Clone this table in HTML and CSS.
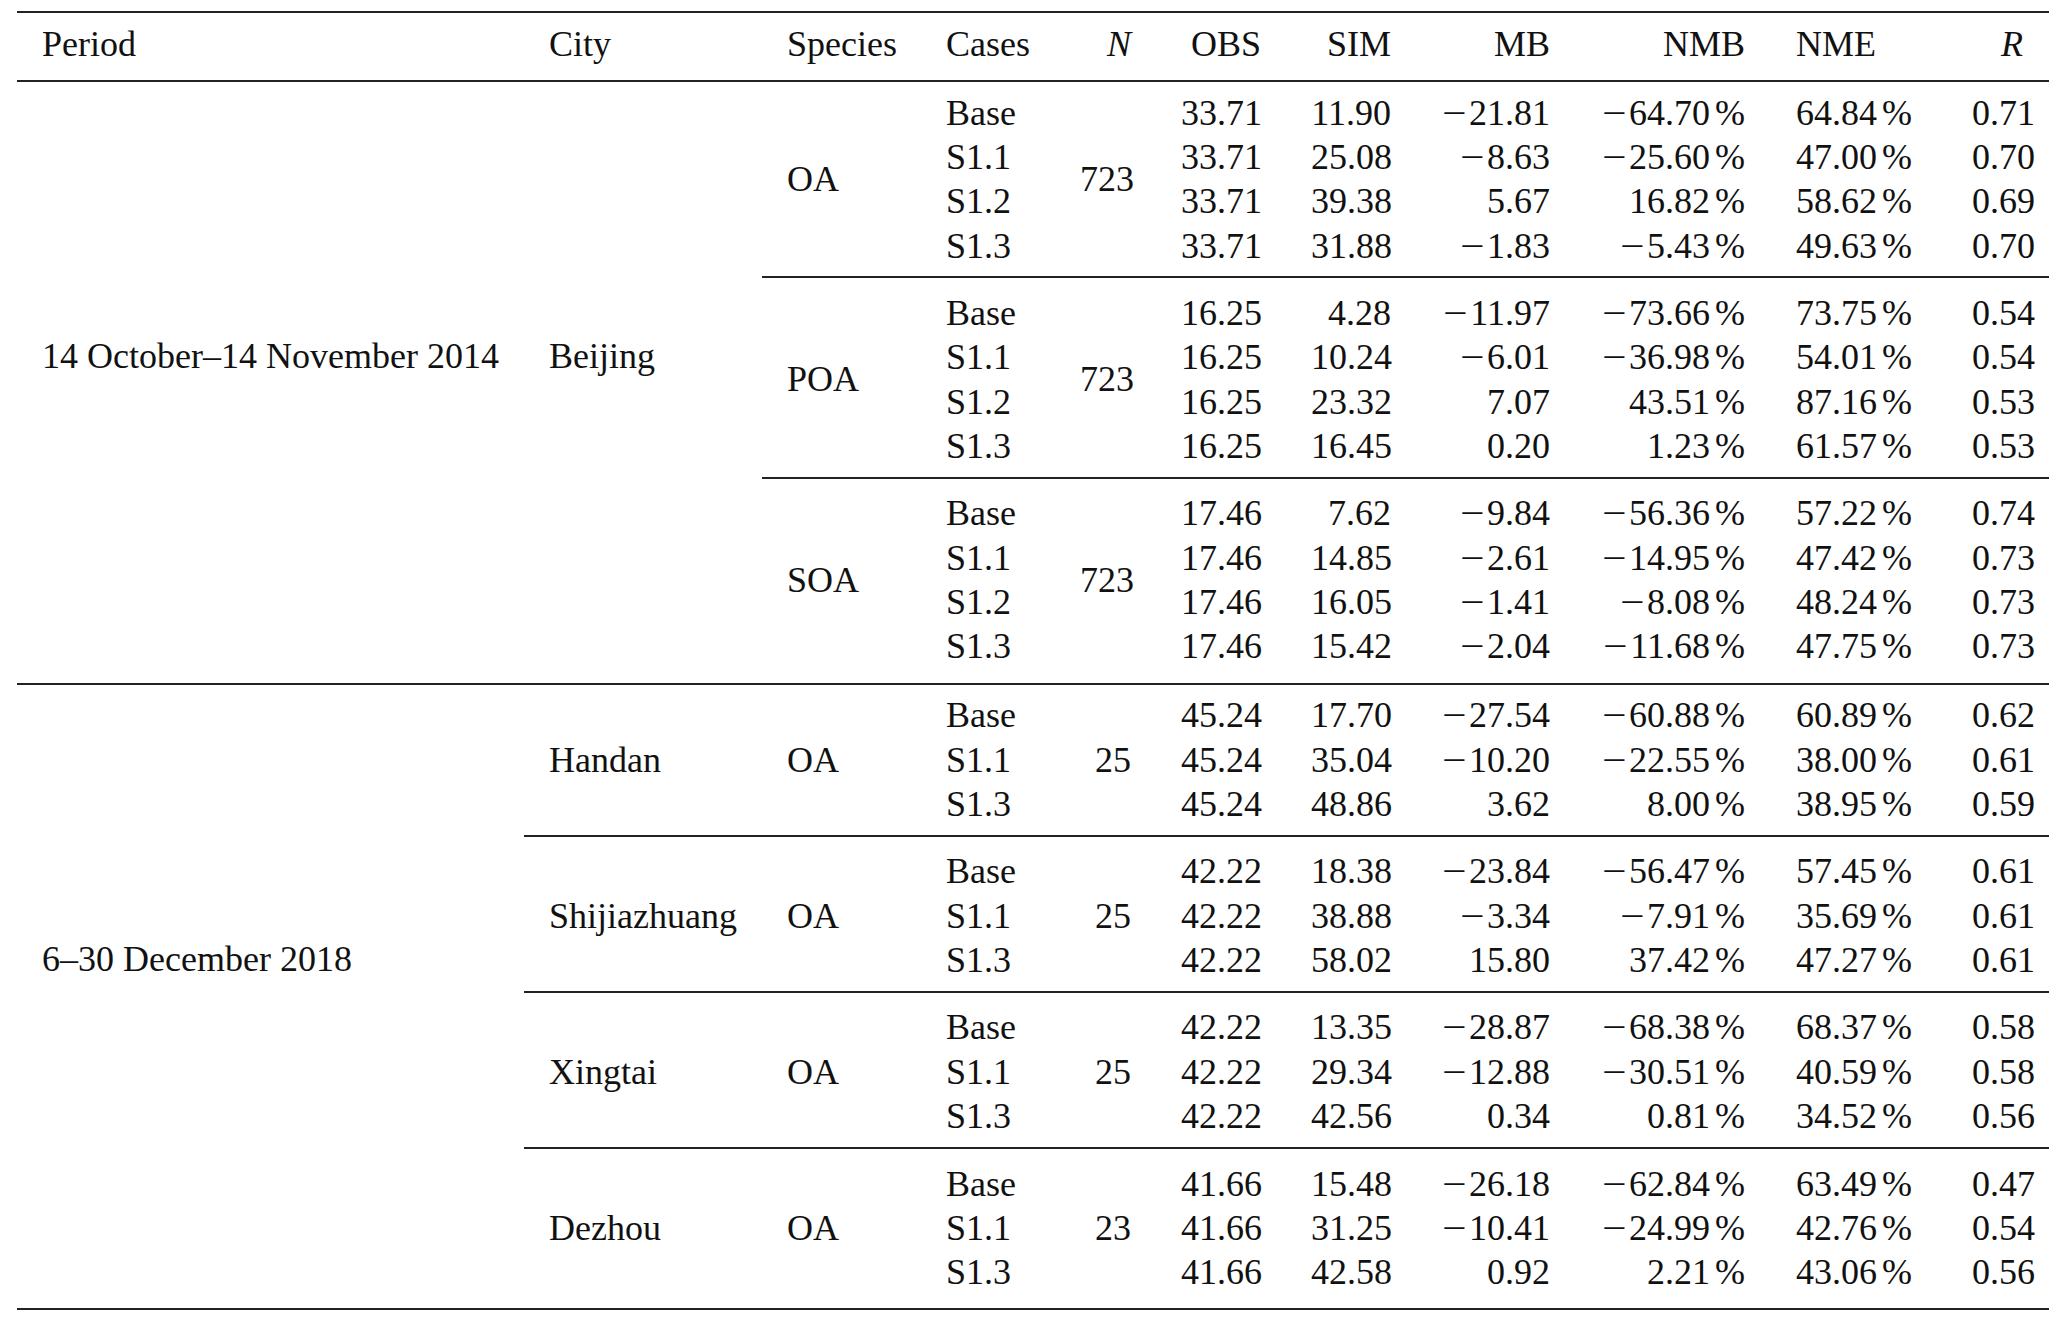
FILE: index.html
```html
<!DOCTYPE html>
<html lang="en">
<head>
<meta charset="utf-8">
<title>Model evaluation statistics</title>
<link rel="stylesheet" href="styles.css">
</head>
<body>
<div class="page">
<table class="t">
  <colgroup>
    <col class="c-period"><col class="c-city"><col class="c-species"><col class="c-cases"><col class="c-n">
    <col class="c-obs"><col class="c-sim"><col class="c-mb"><col class="c-nmb"><col class="c-nme"><col class="c-r">
  </colgroup>
  <thead>
    <tr>
      <th class="l">Period</th><th class="l">City</th><th class="l">Species</th><th class="l">Cases</th>
      <th class="r it">N</th><th class="r">OBS</th><th class="r">SIM</th><th class="r">MB</th>
      <th class="r">NMB</th><th class="l nme">NME</th><th class="r it rr">R</th>
    </tr>
  </thead>
  <tbody>
    <!-- Beijing OA -->
    <tr class="pt-f">
      <td class="l mr" rowspan="12">14 October–14 November 2014</td>
      <td class="l mr" rowspan="12">Beijing</td>
      <td class="l mid pb-p" rowspan="4">OA</td>
      <td class="l">Base</td>
      <td class="r mid pb-p" rowspan="4">723</td>
      <td class="r">33.71</td><td class="r">11.90</td><td class="r"><span class="neg">−</span>21.81</td>
      <td class="r"><span class="neg">−</span>64.70<span class="pct">%</span></td><td class="l nme">64.84<span class="pct">%</span></td><td class="r rr">0.71</td>
    </tr>
    <tr>
      <td class="l">S1.1</td>
      <td class="r">33.71</td><td class="r">25.08</td><td class="r"><span class="neg">−</span>8.63</td>
      <td class="r"><span class="neg">−</span>25.60<span class="pct">%</span></td><td class="l nme">47.00<span class="pct">%</span></td><td class="r rr">0.70</td>
    </tr>
    <tr>
      <td class="l">S1.2</td>
      <td class="r">33.71</td><td class="r">39.38</td><td class="r">5.67</td>
      <td class="r">16.82<span class="pct">%</span></td><td class="l nme">58.62<span class="pct">%</span></td><td class="r rr">0.69</td>
    </tr>
    <tr class="pb-p">
      <td class="l">S1.3</td>
      <td class="r">33.71</td><td class="r">31.88</td><td class="r"><span class="neg">−</span>1.83</td>
      <td class="r"><span class="neg">−</span>5.43<span class="pct">%</span></td><td class="l nme">49.63<span class="pct">%</span></td><td class="r rr">0.70</td>
    </tr>
    <!-- Beijing POA -->
    <tr class="bt pt-p">
      <td class="l mid pb-p" rowspan="4">POA</td>
      <td class="l">Base</td>
      <td class="r mid pb-p" rowspan="4">723</td>
      <td class="r">16.25</td><td class="r">4.28</td><td class="r"><span class="neg">−</span>11.97</td>
      <td class="r"><span class="neg">−</span>73.66<span class="pct">%</span></td><td class="l nme">73.75<span class="pct">%</span></td><td class="r rr">0.54</td>
    </tr>
    <tr>
      <td class="l">S1.1</td>
      <td class="r">16.25</td><td class="r">10.24</td><td class="r"><span class="neg">−</span>6.01</td>
      <td class="r"><span class="neg">−</span>36.98<span class="pct">%</span></td><td class="l nme">54.01<span class="pct">%</span></td><td class="r rr">0.54</td>
    </tr>
    <tr>
      <td class="l">S1.2</td>
      <td class="r">16.25</td><td class="r">23.32</td><td class="r">7.07</td>
      <td class="r">43.51<span class="pct">%</span></td><td class="l nme">87.16<span class="pct">%</span></td><td class="r rr">0.53</td>
    </tr>
    <tr class="pb-p">
      <td class="l">S1.3</td>
      <td class="r">16.25</td><td class="r">16.45</td><td class="r">0.20</td>
      <td class="r">1.23<span class="pct">%</span></td><td class="l nme">61.57<span class="pct">%</span></td><td class="r rr">0.53</td>
    </tr>
    <!-- Beijing SOA -->
    <tr class="bt pt-p">
      <td class="l mid pb-f" rowspan="4">SOA</td>
      <td class="l">Base</td>
      <td class="r mid pb-f" rowspan="4">723</td>
      <td class="r">17.46</td><td class="r">7.62</td><td class="r"><span class="neg">−</span>9.84</td>
      <td class="r"><span class="neg">−</span>56.36<span class="pct">%</span></td><td class="l nme">57.22<span class="pct">%</span></td><td class="r rr">0.74</td>
    </tr>
    <tr>
      <td class="l">S1.1</td>
      <td class="r">17.46</td><td class="r">14.85</td><td class="r"><span class="neg">−</span>2.61</td>
      <td class="r"><span class="neg">−</span>14.95<span class="pct">%</span></td><td class="l nme">47.42<span class="pct">%</span></td><td class="r rr">0.73</td>
    </tr>
    <tr>
      <td class="l">S1.2</td>
      <td class="r">17.46</td><td class="r">16.05</td><td class="r"><span class="neg">−</span>1.41</td>
      <td class="r"><span class="neg">−</span>8.08<span class="pct">%</span></td><td class="l nme">48.24<span class="pct">%</span></td><td class="r rr">0.73</td>
    </tr>
    <tr class="pb-f">
      <td class="l">S1.3</td>
      <td class="r">17.46</td><td class="r">15.42</td><td class="r"><span class="neg">−</span>2.04</td>
      <td class="r"><span class="neg">−</span>11.68<span class="pct">%</span></td><td class="l nme">47.75<span class="pct">%</span></td><td class="r rr">0.73</td>
    </tr>
    <!-- Handan -->
    <tr class="bt pt-f">
      <td class="l mr" rowspan="12">6–30 December 2018</td>
      <td class="l mid pb-p" rowspan="3">Handan</td>
      <td class="l mid pb-p" rowspan="3">OA</td>
      <td class="l">Base</td>
      <td class="r mid pb-p" rowspan="3">25</td>
      <td class="r">45.24</td><td class="r">17.70</td><td class="r"><span class="neg">−</span>27.54</td>
      <td class="r"><span class="neg">−</span>60.88<span class="pct">%</span></td><td class="l nme">60.89<span class="pct">%</span></td><td class="r rr">0.62</td>
    </tr>
    <tr>
      <td class="l">S1.1</td>
      <td class="r">45.24</td><td class="r">35.04</td><td class="r"><span class="neg">−</span>10.20</td>
      <td class="r"><span class="neg">−</span>22.55<span class="pct">%</span></td><td class="l nme">38.00<span class="pct">%</span></td><td class="r rr">0.61</td>
    </tr>
    <tr class="pb-p">
      <td class="l">S1.3</td>
      <td class="r">45.24</td><td class="r">48.86</td><td class="r">3.62</td>
      <td class="r">8.00<span class="pct">%</span></td><td class="l nme">38.95<span class="pct">%</span></td><td class="r rr">0.59</td>
    </tr>
    <!-- Shijiazhuang -->
    <tr class="bt pt-p">
      <td class="l mid pb-p" rowspan="3">Shijiazhuang</td>
      <td class="l mid pb-p" rowspan="3">OA</td>
      <td class="l">Base</td>
      <td class="r mid pb-p" rowspan="3">25</td>
      <td class="r">42.22</td><td class="r">18.38</td><td class="r"><span class="neg">−</span>23.84</td>
      <td class="r"><span class="neg">−</span>56.47<span class="pct">%</span></td><td class="l nme">57.45<span class="pct">%</span></td><td class="r rr">0.61</td>
    </tr>
    <tr>
      <td class="l">S1.1</td>
      <td class="r">42.22</td><td class="r">38.88</td><td class="r"><span class="neg">−</span>3.34</td>
      <td class="r"><span class="neg">−</span>7.91<span class="pct">%</span></td><td class="l nme">35.69<span class="pct">%</span></td><td class="r rr">0.61</td>
    </tr>
    <tr class="pb-p">
      <td class="l">S1.3</td>
      <td class="r">42.22</td><td class="r">58.02</td><td class="r">15.80</td>
      <td class="r">37.42<span class="pct">%</span></td><td class="l nme">47.27<span class="pct">%</span></td><td class="r rr">0.61</td>
    </tr>
    <!-- Xingtai -->
    <tr class="bt pt-p">
      <td class="l mid pb-p" rowspan="3">Xingtai</td>
      <td class="l mid pb-p" rowspan="3">OA</td>
      <td class="l">Base</td>
      <td class="r mid pb-p" rowspan="3">25</td>
      <td class="r">42.22</td><td class="r">13.35</td><td class="r"><span class="neg">−</span>28.87</td>
      <td class="r"><span class="neg">−</span>68.38<span class="pct">%</span></td><td class="l nme">68.37<span class="pct">%</span></td><td class="r rr">0.58</td>
    </tr>
    <tr>
      <td class="l">S1.1</td>
      <td class="r">42.22</td><td class="r">29.34</td><td class="r"><span class="neg">−</span>12.88</td>
      <td class="r"><span class="neg">−</span>30.51<span class="pct">%</span></td><td class="l nme">40.59<span class="pct">%</span></td><td class="r rr">0.58</td>
    </tr>
    <tr class="pb-p">
      <td class="l">S1.3</td>
      <td class="r">42.22</td><td class="r">42.56</td><td class="r">0.34</td>
      <td class="r">0.81<span class="pct">%</span></td><td class="l nme">34.52<span class="pct">%</span></td><td class="r rr">0.56</td>
    </tr>
    <!-- Dezhou -->
    <tr class="bt pt-p">
      <td class="l mid pb-f" rowspan="3">Dezhou</td>
      <td class="l mid pb-f" rowspan="3">OA</td>
      <td class="l">Base</td>
      <td class="r mid pb-f" rowspan="3">23</td>
      <td class="r">41.66</td><td class="r">15.48</td><td class="r"><span class="neg">−</span>26.18</td>
      <td class="r"><span class="neg">−</span>62.84<span class="pct">%</span></td><td class="l nme">63.49<span class="pct">%</span></td><td class="r rr">0.47</td>
    </tr>
    <tr>
      <td class="l">S1.1</td>
      <td class="r">41.66</td><td class="r">31.25</td><td class="r"><span class="neg">−</span>10.41</td>
      <td class="r"><span class="neg">−</span>24.99<span class="pct">%</span></td><td class="l nme">42.76<span class="pct">%</span></td><td class="r rr">0.54</td>
    </tr>
    <tr class="pb-f">
      <td class="l">S1.3</td>
      <td class="r">41.66</td><td class="r">42.58</td><td class="r">0.92</td>
      <td class="r">2.21<span class="pct">%</span></td><td class="l nme">43.06<span class="pct">%</span></td><td class="r rr">0.56</td>
    </tr>
  </tbody>
</table>
</div>
</body>
</html>
```

FILE: styles.css
```css
html, body {
  margin: 0;
  padding: 0;
  background: #ffffff;
}

body {
  font-family: "Liberation Serif", "Times New Roman", serif;
  font-size: 36px;
  color: #111111;
}

.page {
  padding: 11px 18px 0 17px;
}

.t {
  width: 2032px;
  table-layout: fixed;
  border-collapse: separate;
  border-spacing: 0;
  border-top: 2px solid #222222;
  border-bottom: 2px solid #222222;
  line-height: 44.3px;
}

.c-period { width: 507px; }
.c-city { width: 238px; }
.c-species { width: 159px; }
.c-cases { width: 134px; }
.c-n { width: 101px; }
.c-obs { width: 130px; }
.c-sim { width: 130px; }
.c-mb { width: 159px; }
.c-nmb { width: 195px; }
.c-nme { width: 177px; }
.c-r { width: 102px; }

.t th {
  font-weight: normal;
  padding: 8.7px 25px 14px 25px;
  border-bottom: 2px solid #222222;
  white-space: nowrap;
  vertical-align: top;
}

.t td {
  padding: 0 25px;
  white-space: nowrap;
  vertical-align: top;
}

.l { text-align: left; }
.r { text-align: right; }
.it { font-style: italic; }

.t .nme { padding-left: 26px; }
.t .rr { padding-right: 26px; }

/* group spacing */
.pt-f > td { padding-top: 8.7px; }
.pt-p > td { padding-top: 12.7px; }
.pb-f > td { padding-bottom: 14px; }
.pb-p > td { padding-bottom: 8.5px; }

.t td.pb-f { padding-bottom: 14px; }
.t td.pb-p { padding-bottom: 8.5px; }

/* group rules */
.bt > td { border-top: 2px solid #222222; }

/* spanned labels */
.t td.mid { vertical-align: middle; }
.t td.mr {
  vertical-align: top;
  padding-top: 252.35px;
  padding-bottom: 0;
}

/* math minus: wider glyph, tight to the digits */
.neg {
  display: inline-block;
  width: 27px;
  text-align: left;
  transform: scaleX(1.2);
  transform-origin: left center;
}

/* percent sign after a thin space */
.pct {
  margin-left: 5px;
}
```
